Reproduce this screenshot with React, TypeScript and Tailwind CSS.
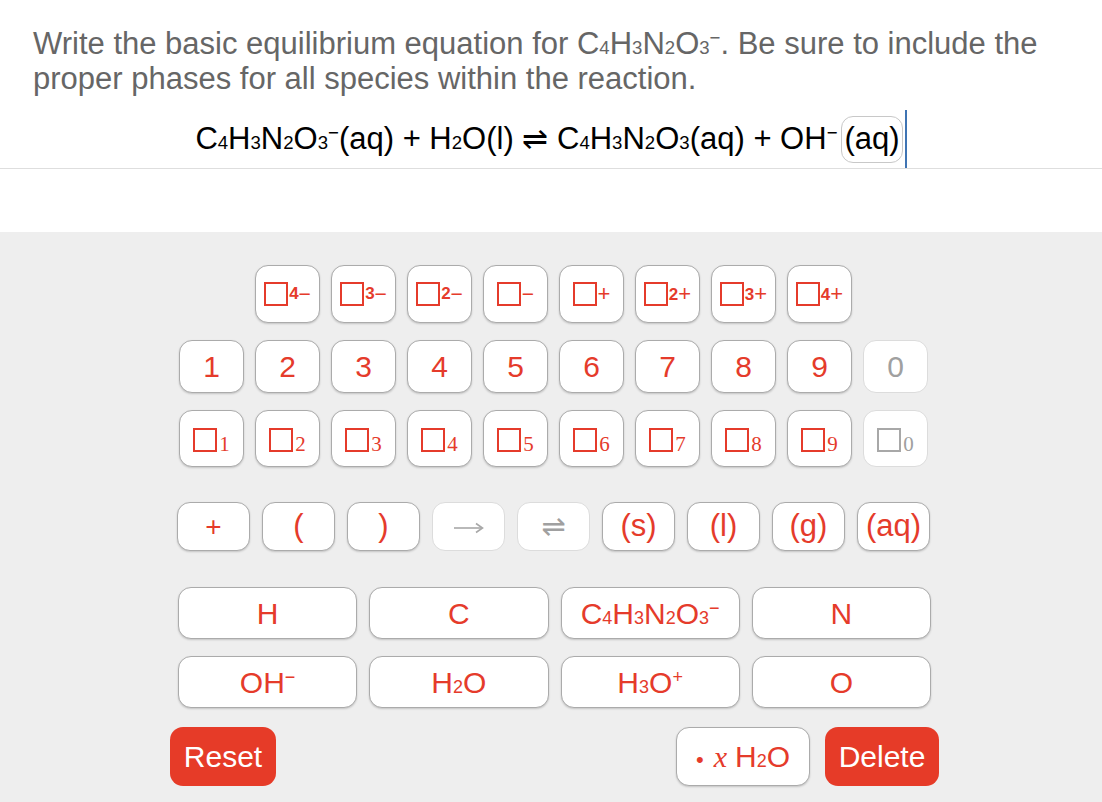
import React from "react";

const RED = "text-[#e53b2b]";

const Sub = ({ children }: { children: React.ReactNode }) => (
  <span className="text-[0.6em] leading-none">{children}</span>
);
const Sup = ({ children }: { children: React.ReactNode }) => (
  <span className="text-[0.6em] align-[0.55em] leading-none">{children}</span>
);

const Btn = ({
  children,
  className = "",
  disabled = false,
}: {
  children: React.ReactNode;
  className?: string;
  disabled?: boolean;
}) => (
  <button
    className={
      "flex items-center justify-center bg-white rounded-[13px] border " +
      (disabled
        ? "border-[#dcdcdc] text-[#a0a0a0] "
        : "border-[#ababab] shadow-[0_1px_2px_rgba(0,0,0,0.18)] text-[#e53b2b] ") +
      className
    }
  >
    {children}
  </button>
);

const Box = ({ gray = false }: { gray?: boolean }) => (
  <span
    className={
      "block w-[24px] h-[24px] border-2 " +
      (gray ? "border-[#a8a8a8]" : "border-[#e53b2b]")
    }
  />
);

const supers = [
  ["4", "−"],
  ["3", "−"],
  ["2", "−"],
  ["", "−"],
  ["", "+"],
  ["2", "+"],
  ["3", "+"],
  ["4", "+"],
];

const App: React.FC = () => {
  return (
    <div className="w-[1102px] h-[802px] bg-white flex flex-col font-['Liberation_Sans',Arial,sans-serif]">
      {/* Question */}
      <div className="pl-[33px] pt-[26px] text-[31px] text-[#666] whitespace-nowrap">
        <div className="h-[35px] leading-[35px]">
          Write the basic equilibrium equation for C<Sub>4</Sub>H<Sub>3</Sub>N<Sub>2</Sub>O
          <Sub>3</Sub>
          <Sup>−</Sup>. Be sure to include the
        </div>
        <div className="h-[35px] leading-[35px]">
          proper phases for all species within the reaction.
        </div>
      </div>

      {/* Answer line */}
      <div className="mt-[14px] h-[58px] flex items-center justify-center text-[31px] text-black whitespace-nowrap">
        <span className="leading-[40px]">
          C<Sub>4</Sub>H<Sub>3</Sub>N<Sub>2</Sub>O<Sub>3</Sub>
          <Sup>−</Sup>(aq) + H<Sub>2</Sub>O(l) ⇌ C<Sub>4</Sub>H<Sub>3</Sub>N<Sub>2</Sub>O
          <Sub>3</Sub>(aq) + OH<Sup>−</Sup>
        </span>
        <span className="ml-[4px] h-[47px] flex items-center px-[2px] border border-[#c8c8c8] rounded-[12px]">
          (aq)
        </span>
        <span className="ml-[2px] w-[2px] h-[58px] bg-[#3f74b3]" />
      </div>
      <div className="h-px bg-[#dedede]" />
      <div className="h-[63px]" />

      {/* Keypad */}
      <div className="flex-1 bg-[#eeeeee] pt-[33px]">
        <div className="ml-[170px] w-[769px]">
          {/* charges */}
          <div className="flex gap-[11px] pl-[85px] h-[58px]">
            {supers.map(([n, s], i) => (
              <Btn key={i} className="w-[65px] h-full">
                <span className="flex items-start">
                  <Box />
                  <span className="ml-[1px] mt-[1px] flex items-center leading-none">
                    {n && <span className="text-[17px] font-bold">{n}</span>}
                    <span className={s === "+" ? "text-[22px]" : "text-[21px]"}>{s}</span>
                  </span>
                </span>
              </Btn>
            ))}
          </div>

          {/* numbers */}
          <div className="mt-[17px] flex gap-[11px] px-[9px] h-[53px]">
            {["1", "2", "3", "4", "5", "6", "7", "8", "9", "0"].map((d) => (
              <Btn key={d} disabled={d === "0"} className="w-[65px] h-full text-[30px]">
                {d}
              </Btn>
            ))}
          </div>

          {/* subscripts */}
          <div className="mt-[17px] flex gap-[11px] px-[9px] h-[57px]">
            {["1", "2", "3", "4", "5", "6", "7", "8", "9", "0"].map((d) => (
              <Btn key={d} disabled={d === "0"} className="w-[65px] h-full">
                <span className="flex items-end mt-[3px]">
                  <Box gray={d === "0"} />
                  <span className="ml-[2px] text-[21px] leading-[16px] font-['Liberation_Serif','Times_New_Roman',serif]">
                    {d}
                  </span>
                </span>
              </Btn>
            ))}
          </div>

          {/* symbols */}
          <div className="mt-[35px] flex gap-[12px] px-[7px] h-[49px]">
            <Btn className="w-[73px] h-full text-[28px]">+</Btn>
            <Btn className="w-[73px] h-full text-[31px]">(</Btn>
            <Btn className="w-[73px] h-full text-[31px]">)</Btn>
            <Btn disabled className="w-[73px] h-full">
              <svg width="31" height="12" viewBox="0 0 31 12" className="mt-[3px]">
                <path d="M1 6 H29" stroke="#a8a8a8" strokeWidth="1.6" fill="none" />
                <path d="M23 1.5 L29.5 6 L23 10.5" stroke="#a8a8a8" strokeWidth="1.6" fill="none" />
              </svg>
            </Btn>
            <Btn disabled className="w-[73px] h-full text-[29px] font-['DejaVu_Sans',sans-serif]">
              ⇌
            </Btn>
            <Btn className="w-[73px] h-full text-[31px]">(s)</Btn>
            <Btn className="w-[73px] h-full text-[31px]">(l)</Btn>
            <Btn className="w-[73px] h-full text-[31px]">(g)</Btn>
            <Btn className="w-[73px] h-full text-[31px]">(aq)</Btn>
          </div>

          {/* species */}
          <div className="mt-[36px] grid grid-cols-4 gap-x-[12px] gap-y-[17px] px-[8px]">
            <Btn className="h-[52px] text-[30px]">H</Btn>
            <Btn className="h-[52px] text-[30px]">C</Btn>
            <Btn className="h-[52px] text-[30px]">
              <span>
                C<Sub>4</Sub>H<Sub>3</Sub>N<Sub>2</Sub>O<Sub>3</Sub>
                <Sup>−</Sup>
              </span>
            </Btn>
            <Btn className="h-[52px] text-[30px]">N</Btn>
            <Btn className="h-[52px] text-[30px]">
              <span>
                OH<Sup>−</Sup>
              </span>
            </Btn>
            <Btn className="h-[52px] text-[30px]">
              <span>
                H<Sub>2</Sub>O
              </span>
            </Btn>
            <Btn className="h-[52px] text-[30px]">
              <span>
                H<Sub>3</Sub>O<Sup>+</Sup>
              </span>
            </Btn>
            <Btn className="h-[52px] text-[30px]">O</Btn>
          </div>

          {/* actions */}
          <div className="mt-[19px] flex items-center h-[59px]">
            <button className="w-[106px] h-full rounded-[13px] bg-[#e63b28] text-white text-[30px]">
              Reset
            </button>
            <div className="flex-1" />
            <Btn className={"w-[134px] h-full text-[30px] " + RED}>
              <span className="flex items-baseline">
                <span className="text-[22px] mr-[10px]">•</span>
                <span className="italic font-['Liberation_Serif','Times_New_Roman',serif] mr-[8px]">
                  x
                </span>
                <span>
                  H<Sub>2</Sub>O
                </span>
              </span>
            </Btn>
            <button className="ml-[15px] w-[114px] h-full rounded-[13px] bg-[#e63b28] text-white text-[30px]">
              Delete
            </button>
          </div>
        </div>
      </div>
    </div>
  );
};

export default App;
